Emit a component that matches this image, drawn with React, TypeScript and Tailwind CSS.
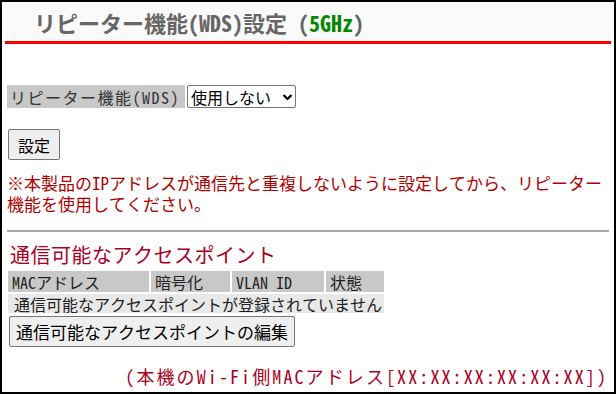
import React from "react";

const font = {
  fontFamily: '"Noto Sans Mono CJK JP", "Noto Sans CJK JP", "Liberation Mono", monospace',
};

export default function App() {
  return (
    <div
      className="w-[616px] h-[394px] border-2 border-black bg-white text-black overflow-hidden"
      style={font}
    >
      <div className="mx-[3px] bg-[#fafafa] border-b-[3px] border-[#ff0000] h-[42px] pl-[29px] flex items-center">
        <h1 className="text-[22px] font-bold text-[#666] leading-none whitespace-nowrap">
          リピーター機能(WDS)設定 (<span className="text-[#008800]">5GHz</span>)
        </h1>
      </div>

      <div className="px-[5px]">
        <div className="mt-[41px] flex items-center h-[23px]">
          <span className="bg-[#c8c8c8] h-[23px] px-[3px] w-[178px] flex items-center text-[16px] text-[#333] tracking-[1.5px] leading-none whitespace-nowrap">
            リピーター機能(WDS)
          </span>
          <div className="ml-[2px] h-[23px] w-[109px] border border-[#767676] rounded-[2px] flex items-center justify-between pl-[3px] pr-[2px]">
            <span className="text-[16px] leading-none whitespace-nowrap">使用しない</span>
            <svg width="11" height="8" viewBox="0 0 11 8">
              <path d="M1.5 2l4 4 4-4" stroke="#000" strokeWidth="2.2" fill="none" />
            </svg>
          </div>
        </div>

        <button className="mt-[21px] ml-[1px] h-[31px] w-[52px] bg-[#efefef] border border-[#767676] rounded-[2px] text-[16px] leading-none">
          設定
        </button>

        <p className="mt-[12px] text-[17px] leading-[21px] text-[#b00000] font-medium whitespace-nowrap">
          ※本製品のIPアドレスが通信先と重複しないように設定してから、リピーター
          <br />
          機能を使用してください。
        </p>

        <hr className="mt-[16px] border-0 border-t-2 border-[#a8a8a8]" />

        <h2 className="mt-[11px] ml-[3px] text-[20px] leading-[24px] text-[#a8001f] tracking-[0.5px] whitespace-nowrap">
          通信可能なアクセスポイント
        </h2>

        <div className="mt-[4px] ml-[1px] w-[376px] text-[16px] text-[#222] leading-none whitespace-nowrap">
          <div className="flex h-[21px] gap-[2px]">
            <div className="bg-[#c8c8c8] w-[141px] pl-[4px] flex items-center">MACアドレス</div>
            <div className="bg-[#c8c8c8] w-[79px] pl-[4px] flex items-center">暗号化</div>
            <div className="bg-[#c8c8c8] w-[92px] pl-[4px] flex items-center">VLAN ID</div>
            <div className="bg-[#c8c8c8] flex-1 pl-[4px] flex items-center">状態</div>
          </div>
          <div className="mt-[2px] h-[19px] bg-[#e8e8e8] pl-[6px] flex items-center">
            通信可能なアクセスポイントが登録されていません
          </div>
        </div>

        <button className="mt-[3px] ml-[2px] h-[31px] w-[286px] bg-[#efefef] border border-[#767676] rounded-[2px] text-[17px] leading-none whitespace-nowrap">
          通信可能なアクセスポイントの編集
        </button>

        <div className="mt-[20px] text-right pr-[1px] text-[18px] leading-none text-[#a8001f] tracking-[2.1px] whitespace-nowrap">
          (本機のWi-Fi側MACアドレス[XX:XX:XX:XX:XX:XX])
        </div>
      </div>
    </div>
  );
}
